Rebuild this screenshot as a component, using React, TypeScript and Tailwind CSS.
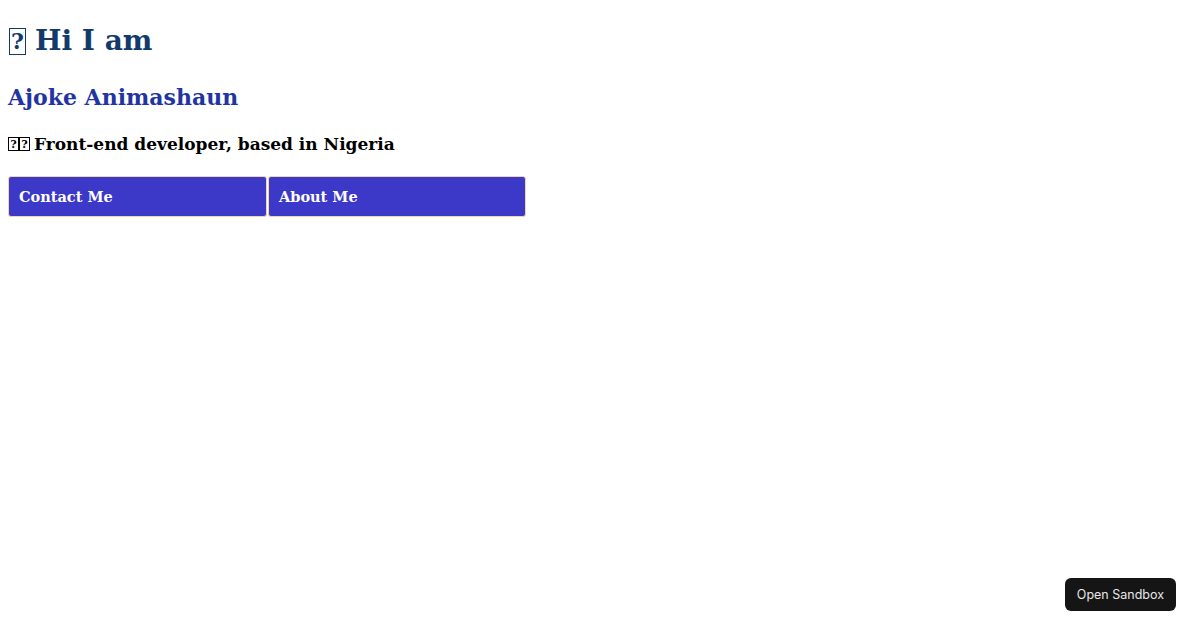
import React from 'react';

// stand-in for the emoji glyphs that show as missing-glyph boxes in the screenshot
const Tofu: React.FC<{ className: string }> = ({ className }) => (
  <span className={`inline-flex items-center justify-center border border-current align-baseline font-bold leading-none ${className}`}>?</span>
);

const App: React.FC = () => {
  return (
    <div className="min-h-screen bg-white px-2 pt-[21px]" style={{ fontFamily: '"DejaVu Serif", "Liberation Serif", serif' }}>
      <h1 className="mb-[21px] flex items-center text-[28px] font-bold leading-[40px] text-[#123a6b]">
        <Tofu className="ml-[1px] h-[27px] w-[17px] text-[22px]" />
        <span className="ml-[9px]">Hi I am</span>
      </h1>
      <h2 className="mb-[20px] text-[22px] font-bold leading-[30px] text-[#2233a3]">Ajoke Animashaun</h2>
      <h3 className="mb-[20px] flex items-center text-[17px] font-bold leading-[24px] text-black">
        <Tofu className="h-[14px] w-[11px] text-[11px]" />
        <Tofu className="h-[14px] w-[11px] text-[11px]" />
        <span className="ml-[4px]">Front-end developer, based in Nigeria</span>
      </h3>
      <div className="flex">
        <button className="h-[41px] w-[259px] rounded-[3px] border border-[#f3d6a8] bg-[#3c38c8] px-[10px] text-left text-[14.5px] font-bold text-white">
          Contact Me
        </button>
        <button className="ml-[1px] h-[41px] w-[258px] rounded-[3px] border border-[#f3d6a8] bg-[#3c38c8] px-[10px] text-left text-[14.5px] font-bold text-white">
          About Me
        </button>
      </div>
      <div className="fixed bottom-[19px] right-[24px] rounded-md bg-[#151515] px-[12px] py-[8px] text-[12.5px] leading-[17px] text-[#e8e8e8]" style={{ fontFamily: 'Inter, "Liberation Sans", sans-serif' }}>
        Open Sandbox
      </div>
    </div>
  );
};

export default App;
